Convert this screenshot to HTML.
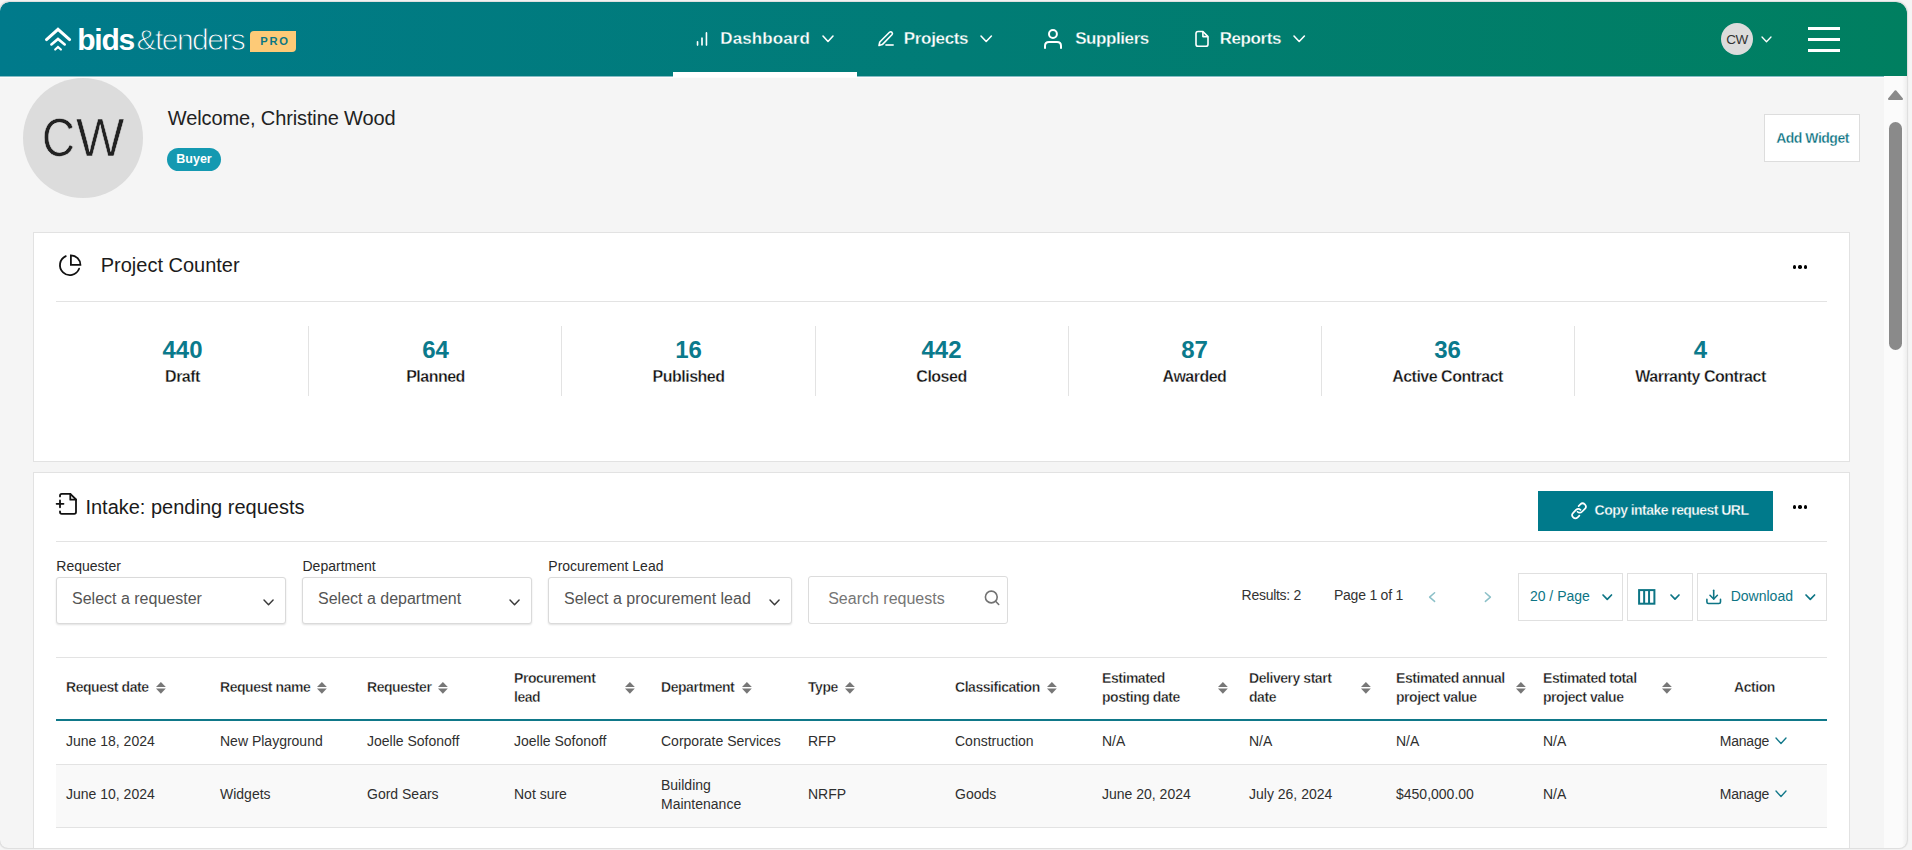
<!DOCTYPE html>
<html><head><meta charset="utf-8">
<style>
*{box-sizing:border-box;margin:0;padding:0}
html,body{width:1912px;height:850px;overflow:hidden;background:#f5f5f5;font-family:"Liberation Sans",sans-serif;color:#222}
.t{position:absolute;line-height:1;white-space:nowrap}
.abs{position:absolute}
svg{overflow:visible}
.win{position:absolute;left:0;top:2px;width:1907px;height:846px;border-radius:9px 11px 8px 8px;overflow:hidden;background:#f5f5f5;box-shadow:0 0 0 1px #e2e2e2, 1px 1px 3px rgba(0,0,0,.10)}
.hdr{position:absolute;left:0;top:0;width:1907px;height:74px;background:linear-gradient(90deg,#007a8b 0%,#017c76 50%,#007f60 100%)}
.card{position:absolute;background:#fff;border:1px solid #e2e2e2}
.b{font-weight:bold}
.th{font-weight:bold;letter-spacing:-0.45px;color:#1b1b1b}
.td{color:#2f2f2f}
</style></head>
<body>
<div class="win">
  <div class="hdr"></div>
</div>

<svg class="abs" style="left:40px;top:22px" width="36" height="34" viewBox="0 0 36 34"><g fill="none" stroke="#fff" stroke-linecap="round" stroke-linejoin="miter" stroke-miterlimit="4"><polyline points="6.5,17.6 18,7.3 29.6,17.6" stroke-width="3.0"/><polyline points="11.4,22.4 18,16.9 24.7,22.4" stroke-width="2.6"/><polyline points="15.2,27.5 18,25.0 20.9,27.5" stroke-width="2.2"/></g></svg>
<div class="t" style="left:77.2px;top:24.61px;font-size:30px;font-weight:bold;color:#fff;letter-spacing:-1.2px">bids</div>
<div class="t" style="left:136.5px;top:24.61px;font-size:30px;color:#fff;-webkit-text-stroke:0.9px #007a89;letter-spacing:-1.55px">&amp;tenders</div>
<div class="abs" style="left:250px;top:31px;width:46px;height:21px;background:#fdca77;border-radius:4px 0 4px 0"></div>
<div class="t" style="left:260.3px;top:36.22px;font-size:11.2px;font-weight:bold;color:#0a7685;letter-spacing:1.65px">PRO</div>
<div class="t" style="left:720.3px;top:30.11px;font-size:17px;font-weight:bold;color:#fff;letter-spacing:0.1px;-webkit-text-stroke:0.3px #017c7a">Dashboard</div>
<div class="t" style="left:903.8px;top:30.11px;font-size:17px;font-weight:bold;color:#fff;letter-spacing:-0.33px;-webkit-text-stroke:0.3px #017c76">Projects</div>
<div class="t" style="left:1075.2px;top:30.11px;font-size:17px;font-weight:bold;color:#fff;letter-spacing:-0.42px;-webkit-text-stroke:0.3px #017c72">Suppliers</div>
<div class="t" style="left:1219.7px;top:30.11px;font-size:17px;font-weight:bold;color:#fff;letter-spacing:-0.4px;-webkit-text-stroke:0.3px #017d6f">Reports</div>
<svg class="abs" style="left:694px;top:30px" width="16" height="18" viewBox="0 0 16 18"><g stroke="#fff" stroke-width="1.8" stroke-linecap="round"><line x1="3.55" y1="11.8" x2="3.55" y2="15.1" stroke-width="1.6"/><line x1="8" y1="7.4" x2="8" y2="15.4" stroke-width="1.9" stroke-linecap="butt" stroke-opacity=".88"/><line x1="12.45" y1="2.9" x2="12.45" y2="15.1" stroke-width="1.6"/></g></svg>
<svg class="abs" style="left:821px;top:34px" width="14" height="9.5" viewBox="0 0 14 9.5"><polyline points="2,2 7.0,7.5 12,2" fill="none" stroke="#fff" stroke-width="1.6" stroke-linecap="round" stroke-linejoin="round"/></svg>
<svg class="abs" style="left:876px;top:30px" width="20" height="18" viewBox="0 0 20 18"><g fill="none" stroke="#fff" stroke-width="1.6" stroke-linecap="round" stroke-linejoin="round"><path d="M3,15.5 L3.8,12 L13.5,2.3 Q14.8,1.2 16,2.4 Q17,3.6 15.9,4.8 L6.3,14.6 Z"/><line x1="9.4" y1="15" x2="17.7" y2="15" stroke-linecap="butt" stroke-width="1.9" stroke-opacity=".85"/></g></svg>
<svg class="abs" style="left:978.6px;top:34px" width="14.4" height="9.5" viewBox="0 0 14.4 9.5"><polyline points="2,2 7.2,7.5 12.4,2" fill="none" stroke="#fff" stroke-width="1.6" stroke-linecap="round" stroke-linejoin="round"/></svg>
<svg class="abs" style="left:1042px;top:28px" width="22" height="22" viewBox="0 0 22 22"><g fill="none" stroke="#fff" stroke-width="2"><circle cx="10.95" cy="5.95" r="3.95"/><path d="M3,20.8 V18 Q3,14 7,14 H15 Q19,14 19,18 V20.8"/></g></svg>
<svg class="abs" style="left:1193px;top:29px" width="18" height="20" viewBox="0 0 18 20"><g fill="none" stroke="#fff" stroke-width="1.6" stroke-linejoin="round"><path d="M3,4.6 Q3,2.5 5.1,2.5 H9.9 L15,7.6 V15.2 Q15,17.3 12.9,17.3 H5.1 Q3,17.3 3,15.2 Z"/><path d="M9.9,2.5 V7.6 H15"/></g></svg>
<svg class="abs" style="left:1291.6px;top:34px" width="14.4" height="9.5" viewBox="0 0 14.4 9.5"><polyline points="2,2 7.2,7.5 12.4,2" fill="none" stroke="#fff" stroke-width="1.6" stroke-linecap="round" stroke-linejoin="round"/></svg>
<div class="abs" style="left:0px;top:76px;width:1907px;height:1px;background:rgba(0,122,139,.45)"></div>
<div class="abs" style="left:0px;top:77px;width:1884px;height:1px;background:#fdfcfc"></div>
<div class="abs" style="left:673px;top:72px;width:184px;height:5px;background:#fff"></div>
<div class="abs" style="left:1721px;top:23px;width:32px;height:32px;background:#dcdcdc;border-radius:50%"></div>
<div class="t" style="left:1437px;width:600px;text-align:center;top:32.57px;font-size:13.5px;color:#333;letter-spacing:-0.6px">CW</div>
<svg class="abs" style="left:1759.6px;top:34.8px" width="13.0" height="8.8" viewBox="0 0 13.0 8.8"><polyline points="2,2 6.5,6.8 11.0,2" fill="none" stroke="#fff" stroke-width="1.3" stroke-linecap="round" stroke-linejoin="round"/></svg>
<div class="abs" style="left:1808px;top:27px;width:32px;height:3px;background:#fff"></div>
<div class="abs" style="left:1808px;top:38px;width:32px;height:3px;background:#fff"></div>
<div class="abs" style="left:1808px;top:49px;width:32px;height:3px;background:#fff"></div>
<div class="abs" style="left:23px;top:78px;width:120px;height:120px;background:#dcdcdc;border-radius:50%"></div>
<div class="t" style="left:41.5px;top:111.44px;font-size:53px;color:#222;transform:scaleX(0.86);transform-origin:0 0;-webkit-text-stroke:0.6px #dcdcdc">C</div>
<div class="t" style="left:75.5px;top:111.44px;font-size:53px;color:#222;transform:scaleX(0.965);transform-origin:0 0;-webkit-text-stroke:0.6px #dcdcdc">W</div>
<div class="t" style="left:167.8px;top:108.17px;font-size:20px;color:#222;letter-spacing:-0.12px">Welcome, Christine Wood</div>
<div class="abs" style="left:167px;top:148px;width:54px;height:23px;background:#1499b1;border-radius:12px"></div>
<div class="t" style="left:176.3px;top:152.82px;font-size:12.5px;font-weight:bold;color:#fff">Buyer</div>
<div class="abs" style="left:1764px;top:114px;width:96px;height:48px;background:#fff;border:1px solid #dddddd"></div>
<div class="t" style="left:1776.2px;top:131.15px;font-size:14px;font-weight:bold;color:#0a7180;letter-spacing:-0.5px;-webkit-text-stroke:0.3px #fff">Add Widget</div>
<div class="card" style="left:33px;top:232px;width:1817px;height:230px"></div>
<svg class="abs" style="left:57px;top:252px" width="26" height="26" viewBox="0 0 26 26"><g fill="none" stroke="#111" stroke-width="1.8" stroke-linejoin="miter" stroke-linecap="round"><path d="M8.8,4.1 A9.9,9.9 0 1 0 22.1,16.7"/><path d="M13.9,12.8 V3.3 A9.5,9.5 0 0 1 23.4,12.8 Z"/></g></svg>
<div class="t" style="left:100.7px;top:255.07px;font-size:20px;color:#1b1b1b">Project Counter</div>
<div class="abs" style="left:1793px;top:265.2px;width:3.4px;height:3.4px;background:#000;border-radius:50%"></div>
<div class="abs" style="left:1798.3px;top:265.2px;width:3.4px;height:3.4px;background:#000;border-radius:50%"></div>
<div class="abs" style="left:1803.6px;top:265.2px;width:3.4px;height:3.4px;background:#000;border-radius:50%"></div>
<div class="abs" style="left:56px;top:301px;width:1771px;height:1px;background:#e3e3e3"></div>
<div class="t" style="left:-117.5px;width:600px;text-align:center;top:337.68px;font-size:24px;font-weight:bold;color:#0b7a8c">440</div>
<div class="t" style="left:-117.5px;width:600px;text-align:center;top:369.26px;font-size:16px;font-weight:bold;color:#111;letter-spacing:-0.5px;-webkit-text-stroke:0.3px #fff">Draft</div>
<div class="t" style="left:135.5px;width:600px;text-align:center;top:337.68px;font-size:24px;font-weight:bold;color:#0b7a8c">64</div>
<div class="t" style="left:135.5px;width:600px;text-align:center;top:369.26px;font-size:16px;font-weight:bold;color:#111;letter-spacing:-0.5px;-webkit-text-stroke:0.3px #fff">Planned</div>
<div class="abs" style="left:308px;top:326px;width:1px;height:70px;background:#e3e3e3"></div>
<div class="t" style="left:388.5px;width:600px;text-align:center;top:337.68px;font-size:24px;font-weight:bold;color:#0b7a8c">16</div>
<div class="t" style="left:388.5px;width:600px;text-align:center;top:369.26px;font-size:16px;font-weight:bold;color:#111;letter-spacing:-0.5px;-webkit-text-stroke:0.3px #fff">Published</div>
<div class="abs" style="left:561px;top:326px;width:1px;height:70px;background:#e3e3e3"></div>
<div class="t" style="left:641.5px;width:600px;text-align:center;top:337.68px;font-size:24px;font-weight:bold;color:#0b7a8c">442</div>
<div class="t" style="left:641.5px;width:600px;text-align:center;top:369.26px;font-size:16px;font-weight:bold;color:#111;letter-spacing:-0.5px;-webkit-text-stroke:0.3px #fff">Closed</div>
<div class="abs" style="left:815px;top:326px;width:1px;height:70px;background:#e3e3e3"></div>
<div class="t" style="left:894.5px;width:600px;text-align:center;top:337.68px;font-size:24px;font-weight:bold;color:#0b7a8c">87</div>
<div class="t" style="left:894.5px;width:600px;text-align:center;top:369.26px;font-size:16px;font-weight:bold;color:#111;letter-spacing:-0.5px;-webkit-text-stroke:0.3px #fff">Awarded</div>
<div class="abs" style="left:1068px;top:326px;width:1px;height:70px;background:#e3e3e3"></div>
<div class="t" style="left:1147.5px;width:600px;text-align:center;top:337.68px;font-size:24px;font-weight:bold;color:#0b7a8c">36</div>
<div class="t" style="left:1147.5px;width:600px;text-align:center;top:369.26px;font-size:16px;font-weight:bold;color:#111;letter-spacing:-0.5px;-webkit-text-stroke:0.3px #fff">Active Contract</div>
<div class="abs" style="left:1321px;top:326px;width:1px;height:70px;background:#e3e3e3"></div>
<div class="t" style="left:1400.5px;width:600px;text-align:center;top:337.68px;font-size:24px;font-weight:bold;color:#0b7a8c">4</div>
<div class="t" style="left:1400.5px;width:600px;text-align:center;top:369.26px;font-size:16px;font-weight:bold;color:#111;letter-spacing:-0.5px;-webkit-text-stroke:0.3px #fff">Warranty Contract</div>
<div class="abs" style="left:1574px;top:326px;width:1px;height:70px;background:#e3e3e3"></div>
<div class="card" style="left:33px;top:472px;width:1817px;height:400px"></div>
<svg class="abs" style="left:50px;top:488px" width="35" height="32" viewBox="0 0 35 32"><g fill="none" stroke="#111" stroke-width="1.8" stroke-linejoin="round" stroke-linecap="round"><path d="M10,8.4 V7.6 Q10,5.8 11.8,5.8 H20.3 L26,11.5 V24 Q26,25.8 24.2,25.8 H11.8 Q10,25.8 10,24 V23.3"/><path d="M20.3,5.8 V11.7 H26"/><path d="M6.6,15.8 H13.5 M10,12.4 V19.3"/></g></svg>
<div class="t" style="left:85.4px;top:497.47px;font-size:20px;color:#1b1b1b">Intake: pending requests</div>
<div class="abs" style="left:1538px;top:491px;width:235px;height:40px;background:#007a8b"></div>
<svg class="abs" style="left:1566px;top:498px" width="26" height="26" viewBox="0 0 26 26"><g transform="translate(13,12.85) rotate(-45)" fill="none" stroke="#fff" stroke-width="1.7" stroke-linecap="round"><path d="M3.1,-3.64 L5.5,-3.64 A3.2,3.2 0 0 1 5.5,2.76 L1.5,2.76 A3.2,3.2 0 0 1 -1.7,-0.44"/><path d="M-3.1,3.64 L-5.5,3.64 A3.2,3.2 0 0 1 -5.5,-2.76 L-1.5,-2.76 A3.2,3.2 0 0 1 1.7,0.44"/></g></svg>
<div class="t" style="left:1594.6px;top:502.95px;font-size:14px;font-weight:bold;color:#fff;letter-spacing:-0.55px;-webkit-text-stroke:0.3px #007a8b">Copy intake request URL</div>
<div class="abs" style="left:1793px;top:505.2px;width:3.4px;height:3.4px;background:#000;border-radius:50%"></div>
<div class="abs" style="left:1798.3px;top:505.2px;width:3.4px;height:3.4px;background:#000;border-radius:50%"></div>
<div class="abs" style="left:1803.6px;top:505.2px;width:3.4px;height:3.4px;background:#000;border-radius:50%"></div>
<div class="abs" style="left:56px;top:541px;width:1771px;height:1px;background:#e3e3e3"></div>
<div class="t" style="left:56.3px;top:559.15px;font-size:14px;color:#2a2a2a">Requester</div>
<div class="t" style="left:302.5px;top:559.15px;font-size:14px;color:#2a2a2a">Department</div>
<div class="t" style="left:548.3px;top:559.15px;font-size:14px;color:#2a2a2a">Procurement Lead</div>
<div class="abs" style="left:56px;top:577px;width:230px;height:47px;background:#fff;border:1px solid #dadada;border-radius:3px;box-shadow:0 1px 2px rgba(0,0,0,.12)"></div>
<div class="t" style="left:72px;top:590.96px;font-size:16px;color:#555">Select a requester</div>
<svg class="abs" style="left:261.9px;top:597.7px" width="13.1" height="8.7" viewBox="0 0 13.1 8.7"><polyline points="2,2 6.55,6.7 11.1,2" fill="none" stroke="#3a3a3a" stroke-width="1.45" stroke-linecap="round" stroke-linejoin="round"/></svg>
<div class="abs" style="left:302px;top:577px;width:230px;height:47px;background:#fff;border:1px solid #dadada;border-radius:3px;box-shadow:0 1px 2px rgba(0,0,0,.12)"></div>
<div class="t" style="left:318px;top:590.96px;font-size:16px;color:#555">Select a department</div>
<svg class="abs" style="left:507.9px;top:597.7px" width="13.1" height="8.7" viewBox="0 0 13.1 8.7"><polyline points="2,2 6.55,6.7 11.1,2" fill="none" stroke="#3a3a3a" stroke-width="1.45" stroke-linecap="round" stroke-linejoin="round"/></svg>
<div class="abs" style="left:548px;top:577px;width:244px;height:47px;background:#fff;border:1px solid #dadada;border-radius:3px;box-shadow:0 1px 2px rgba(0,0,0,.12)"></div>
<div class="t" style="left:564px;top:590.96px;font-size:16px;color:#555">Select a procurement lead</div>
<svg class="abs" style="left:767.9px;top:597.7px" width="13.1" height="8.7" viewBox="0 0 13.1 8.7"><polyline points="2,2 6.55,6.7 11.1,2" fill="none" stroke="#3a3a3a" stroke-width="1.45" stroke-linecap="round" stroke-linejoin="round"/></svg>
<div class="abs" style="left:808px;top:576px;width:200px;height:48px;background:#fff;border:1px solid #dcdcdc;border-radius:3px"></div>
<div class="t" style="left:828.2px;top:591.16px;font-size:16px;color:#767676">Search requests</div>
<svg class="abs" style="left:982px;top:589px" width="20" height="20" viewBox="0 0 20 20"><g fill="none" stroke="#727272" stroke-width="1.6" stroke-linecap="round"><circle cx="9.3" cy="8" r="5.9"/><line x1="13.6" y1="12.3" x2="16.7" y2="15.5"/></g></svg>
<div class="t" style="left:1241.6px;top:588.35px;font-size:14px;color:#333;letter-spacing:-0.28px">Results: 2</div>
<div class="t" style="left:1333.9px;top:588.35px;font-size:14px;color:#333;letter-spacing:-0.22px">Page 1 of 1</div>
<svg class="abs" style="left:1426px;top:590px" width="12" height="15" viewBox="0 0 12 15"><polyline points="8.6,2.8 3.6,7.1 8.6,11.4" fill="none" stroke="#8cc0c8" stroke-width="1.5" stroke-linecap="round" stroke-linejoin="round"/></svg>
<svg class="abs" style="left:1482px;top:590px" width="12" height="15" viewBox="0 0 12 15"><polyline points="3.4,2.8 8.4,7.1 3.4,11.4" fill="none" stroke="#8cc0c8" stroke-width="1.5" stroke-linecap="round" stroke-linejoin="round"/></svg>
<div class="abs" style="left:1518px;top:573px;width:105px;height:48px;background:#fff;border:1px solid #e0e0e0"></div>
<div class="t" style="left:1529.9px;top:588.75px;font-size:14px;color:#0d7585">20 / Page</div>
<svg class="abs" style="left:1600.7px;top:592.8px" width="12.5" height="8.4" viewBox="0 0 12.5 8.4"><polyline points="2,2 6.25,6.4 10.5,2" fill="none" stroke="#0d7585" stroke-width="1.7" stroke-linecap="round" stroke-linejoin="round"/></svg>
<div class="abs" style="left:1627px;top:573px;width:66px;height:48px;background:#fff;border:1px solid #e0e0e0"></div>
<svg class="abs" style="left:1637px;top:588px" width="20" height="18" viewBox="0 0 20 18"><g fill="none" stroke="#0d7585" stroke-width="2"><rect x="2.1" y="2.1" width="15.3" height="13.6"/><line x1="7.15" y1="2" x2="7.15" y2="15.7"/><line x1="12.05" y1="2" x2="12.05" y2="15.7"/></g></svg>
<svg class="abs" style="left:1669.1px;top:592.8px" width="12.0" height="8.2" viewBox="0 0 12.0 8.2"><polyline points="2,2 6.0,6.2 10.0,2" fill="none" stroke="#0d7585" stroke-width="1.7" stroke-linecap="round" stroke-linejoin="round"/></svg>
<div class="abs" style="left:1697px;top:573px;width:130px;height:48px;background:#fff;border:1px solid #e0e0e0"></div>
<svg class="abs" style="left:1704px;top:587px" width="20" height="20" viewBox="0 0 20 20"><g fill="none" stroke="#0d7585" stroke-width="1.6" stroke-linecap="round" stroke-linejoin="round"><path d="M2.9,12.4 V14.9 Q2.9,16.5 4.5,16.5 H14.9 Q16.5,16.5 16.5,14.9 V12.4"/><line x1="9.7" y1="3.2" x2="9.7" y2="12"/><polyline points="6,8.3 9.7,12 13.4,8.3"/></g></svg>
<div class="t" style="left:1730.7px;top:588.75px;font-size:14px;color:#0d7585">Download</div>
<svg class="abs" style="left:1804px;top:592.8px" width="12.6" height="8.4" viewBox="0 0 12.6 8.4"><polyline points="2,2 6.3,6.4 10.6,2" fill="none" stroke="#0d7585" stroke-width="1.7" stroke-linecap="round" stroke-linejoin="round"/></svg>
<div class="abs" style="left:56px;top:657px;width:1771px;height:1px;background:#e3e3e3"></div>
<div class="abs" style="left:56px;top:719px;width:1771px;height:2px;background:#0f7889"></div>
<div class="abs" style="left:56px;top:764px;width:1771px;height:1px;background:#e3e3e3"></div>
<div class="abs" style="left:56px;top:765px;width:1771px;height:62px;background:#f9f9f9"></div>
<div class="abs" style="left:56px;top:827px;width:1771px;height:1px;background:#e3e3e3"></div>
<div class="t" style="left:66px;top:680.15px;font-size:14px;font-weight:bold;letter-spacing:-0.45px;color:#111;-webkit-text-stroke:0.35px #fff">Request date</div>
<svg class="abs" style="left:156px;top:682.2px" width="10" height="12" viewBox="0 0 10 12"><g fill="#777"><path d="M4.9,0 L9.8,5 H0 Z"/><path d="M4.9,11.7 L9.8,6.6 H0 Z"/></g></svg>
<div class="t" style="left:220px;top:680.15px;font-size:14px;font-weight:bold;letter-spacing:-0.45px;color:#111;-webkit-text-stroke:0.35px #fff">Request name</div>
<svg class="abs" style="left:317px;top:682.2px" width="10" height="12" viewBox="0 0 10 12"><g fill="#777"><path d="M4.9,0 L9.8,5 H0 Z"/><path d="M4.9,11.7 L9.8,6.6 H0 Z"/></g></svg>
<div class="t" style="left:367px;top:680.15px;font-size:14px;font-weight:bold;letter-spacing:-0.45px;color:#111;-webkit-text-stroke:0.35px #fff">Requester</div>
<svg class="abs" style="left:438px;top:682.2px" width="10" height="12" viewBox="0 0 10 12"><g fill="#777"><path d="M4.9,0 L9.8,5 H0 Z"/><path d="M4.9,11.7 L9.8,6.6 H0 Z"/></g></svg>
<div class="t" style="left:661px;top:680.15px;font-size:14px;font-weight:bold;letter-spacing:-0.45px;color:#111;-webkit-text-stroke:0.35px #fff">Department</div>
<svg class="abs" style="left:742px;top:682.2px" width="10" height="12" viewBox="0 0 10 12"><g fill="#777"><path d="M4.9,0 L9.8,5 H0 Z"/><path d="M4.9,11.7 L9.8,6.6 H0 Z"/></g></svg>
<div class="t" style="left:808px;top:680.15px;font-size:14px;font-weight:bold;letter-spacing:-0.45px;color:#111;-webkit-text-stroke:0.35px #fff">Type</div>
<svg class="abs" style="left:845px;top:682.2px" width="10" height="12" viewBox="0 0 10 12"><g fill="#777"><path d="M4.9,0 L9.8,5 H0 Z"/><path d="M4.9,11.7 L9.8,6.6 H0 Z"/></g></svg>
<div class="t" style="left:955px;top:680.15px;font-size:14px;font-weight:bold;letter-spacing:-0.45px;color:#111;-webkit-text-stroke:0.35px #fff">Classification</div>
<svg class="abs" style="left:1047px;top:682.2px" width="10" height="12" viewBox="0 0 10 12"><g fill="#777"><path d="M4.9,0 L9.8,5 H0 Z"/><path d="M4.9,11.7 L9.8,6.6 H0 Z"/></g></svg>
<div class="t" style="left:514px;top:671.15px;font-size:14px;font-weight:bold;letter-spacing:-0.45px;color:#111;-webkit-text-stroke:0.35px #fff">Procurement</div>
<div class="t" style="left:514px;top:690.15px;font-size:14px;font-weight:bold;letter-spacing:-0.45px;color:#111;-webkit-text-stroke:0.35px #fff">lead</div>
<svg class="abs" style="left:625px;top:682.2px" width="10" height="12" viewBox="0 0 10 12"><g fill="#777"><path d="M4.9,0 L9.8,5 H0 Z"/><path d="M4.9,11.7 L9.8,6.6 H0 Z"/></g></svg>
<div class="t" style="left:1102px;top:671.15px;font-size:14px;font-weight:bold;letter-spacing:-0.45px;color:#111;-webkit-text-stroke:0.35px #fff">Estimated</div>
<div class="t" style="left:1102px;top:690.15px;font-size:14px;font-weight:bold;letter-spacing:-0.45px;color:#111;-webkit-text-stroke:0.35px #fff">posting date</div>
<svg class="abs" style="left:1218px;top:682.2px" width="10" height="12" viewBox="0 0 10 12"><g fill="#777"><path d="M4.9,0 L9.8,5 H0 Z"/><path d="M4.9,11.7 L9.8,6.6 H0 Z"/></g></svg>
<div class="t" style="left:1249px;top:671.15px;font-size:14px;font-weight:bold;letter-spacing:-0.45px;color:#111;-webkit-text-stroke:0.35px #fff">Delivery start</div>
<div class="t" style="left:1249px;top:690.15px;font-size:14px;font-weight:bold;letter-spacing:-0.45px;color:#111;-webkit-text-stroke:0.35px #fff">date</div>
<svg class="abs" style="left:1361px;top:682.2px" width="10" height="12" viewBox="0 0 10 12"><g fill="#777"><path d="M4.9,0 L9.8,5 H0 Z"/><path d="M4.9,11.7 L9.8,6.6 H0 Z"/></g></svg>
<div class="t" style="left:1396px;top:671.15px;font-size:14px;font-weight:bold;letter-spacing:-0.45px;color:#111;-webkit-text-stroke:0.35px #fff">Estimated annual</div>
<div class="t" style="left:1396px;top:690.15px;font-size:14px;font-weight:bold;letter-spacing:-0.45px;color:#111;-webkit-text-stroke:0.35px #fff">project value</div>
<svg class="abs" style="left:1516px;top:682.2px" width="10" height="12" viewBox="0 0 10 12"><g fill="#777"><path d="M4.9,0 L9.8,5 H0 Z"/><path d="M4.9,11.7 L9.8,6.6 H0 Z"/></g></svg>
<div class="t" style="left:1543px;top:671.15px;font-size:14px;font-weight:bold;letter-spacing:-0.45px;color:#111;-webkit-text-stroke:0.35px #fff">Estimated total</div>
<div class="t" style="left:1543px;top:690.15px;font-size:14px;font-weight:bold;letter-spacing:-0.45px;color:#111;-webkit-text-stroke:0.35px #fff">project value</div>
<svg class="abs" style="left:1662px;top:682.2px" width="10" height="12" viewBox="0 0 10 12"><g fill="#777"><path d="M4.9,0 L9.8,5 H0 Z"/><path d="M4.9,11.7 L9.8,6.6 H0 Z"/></g></svg>
<div class="t" style="left:1734px;top:680.15px;font-size:14px;font-weight:bold;letter-spacing:-0.45px;color:#111;-webkit-text-stroke:0.35px #fff">Action</div>
<div class="t" style="left:66px;top:734.15px;font-size:14px;color:#2f2f2f">June 18, 2024</div>
<div class="t" style="left:220px;top:734.15px;font-size:14px;color:#2f2f2f">New Playground</div>
<div class="t" style="left:367px;top:734.15px;font-size:14px;color:#2f2f2f">Joelle Sofonoff</div>
<div class="t" style="left:514px;top:734.15px;font-size:14px;color:#2f2f2f">Joelle Sofonoff</div>
<div class="t" style="left:661px;top:734.15px;font-size:14px;color:#2f2f2f">Corporate Services</div>
<div class="t" style="left:808px;top:734.15px;font-size:14px;color:#2f2f2f">RFP</div>
<div class="t" style="left:955px;top:734.15px;font-size:14px;color:#2f2f2f">Construction</div>
<div class="t" style="left:1102px;top:734.15px;font-size:14px;color:#2f2f2f">N/A</div>
<div class="t" style="left:1249px;top:734.15px;font-size:14px;color:#2f2f2f">N/A</div>
<div class="t" style="left:1396px;top:734.15px;font-size:14px;color:#2f2f2f">N/A</div>
<div class="t" style="left:1543px;top:734.15px;font-size:14px;color:#2f2f2f">N/A</div>
<div class="t" style="left:66px;top:787.15px;font-size:14px;color:#2f2f2f">June 10, 2024</div>
<div class="t" style="left:220px;top:787.15px;font-size:14px;color:#2f2f2f">Widgets</div>
<div class="t" style="left:367px;top:787.15px;font-size:14px;color:#2f2f2f">Gord Sears</div>
<div class="t" style="left:514px;top:787.15px;font-size:14px;color:#2f2f2f">Not sure</div>
<div class="t" style="left:808px;top:787.15px;font-size:14px;color:#2f2f2f">NRFP</div>
<div class="t" style="left:955px;top:787.15px;font-size:14px;color:#2f2f2f">Goods</div>
<div class="t" style="left:1102px;top:787.15px;font-size:14px;color:#2f2f2f">June 20, 2024</div>
<div class="t" style="left:1249px;top:787.15px;font-size:14px;color:#2f2f2f">July 26, 2024</div>
<div class="t" style="left:1396px;top:787.15px;font-size:14px;color:#2f2f2f">$450,000.00</div>
<div class="t" style="left:1543px;top:787.15px;font-size:14px;color:#2f2f2f">N/A</div>
<div class="t" style="left:661px;top:778.15px;font-size:14px;color:#2f2f2f">Building</div>
<div class="t" style="left:661px;top:797.15px;font-size:14px;color:#2f2f2f">Maintenance</div>
<div class="t" style="left:1719.7px;top:734.15px;font-size:14px;color:#2f2f2f;letter-spacing:-0.2px">Manage</div>
<div class="t" style="left:1719.7px;top:787.15px;font-size:14px;color:#2f2f2f;letter-spacing:-0.2px">Manage</div>
<svg class="abs" style="left:1774px;top:736.3px" width="14" height="9.5" viewBox="0 0 14 9.5"><polyline points="2,2 7.0,7.5 12,2" fill="none" stroke="#12788a" stroke-width="1.35" stroke-linecap="round" stroke-linejoin="round"/></svg>
<svg class="abs" style="left:1774px;top:789.3px" width="14" height="9.5" viewBox="0 0 14 9.5"><polyline points="2,2 7.0,7.5 12,2" fill="none" stroke="#12788a" stroke-width="1.35" stroke-linecap="round" stroke-linejoin="round"/></svg>
<div class="abs" style="left:1884px;top:76px;width:23px;height:772px;background:#fbfbfb"></div>
<svg class="abs" style="left:1886px;top:88px" width="20" height="14" viewBox="0 0 20 14"><path d="M9.5,3.2 L16,10.9 H3 Z" fill="#8a8a8a" stroke="#8a8a8a" stroke-width="2" stroke-linejoin="round"/></svg>
<div class="abs" style="left:1902px;top:76px;width:5px;height:772px;background:linear-gradient(90deg,rgba(0,0,0,0),rgba(0,0,0,.05))"></div>
<div class="abs" style="left:1889px;top:122px;width:13px;height:228px;background:#8a8a8a;border-radius:7px"></div>
<div class="abs" style="left:0;top:2px;width:1907px;height:846px;border-radius:9px 11px 8px 8px;box-shadow:0 0 1.2px 0.6px rgba(0,0,0,.10), 0 0 0 80px #f5f5f5;pointer-events:none"></div>
</body></html>
